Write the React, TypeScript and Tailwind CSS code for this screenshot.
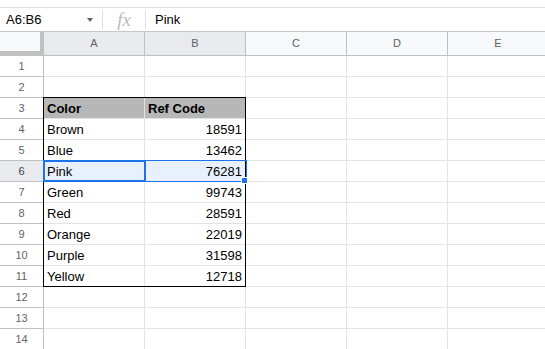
import React from "react"

const cols = ["A", "B", "C", "D", "E"]

const rows: Record<number, [string, string]> = {
  3: ["Color", "Ref Code"],
  4: ["Brown", "18591"],
  5: ["Blue", "13462"],
  6: ["Pink", "76281"],
  7: ["Green", "99743"],
  8: ["Red", "28591"],
  9: ["Orange", "22019"],
  10: ["Purple", "31598"],
  11: ["Yellow", "12718"],
}

const font = { fontFamily: '"Liberation Sans", Arial, sans-serif' }

function FormulaBar() {
  return (
    <div className="flex h-[25px] border-y border-[#e0e0e0] border-b-[#c7c7c7] bg-white text-[13px] text-black">
      <div className="flex w-[102px] items-center justify-between pl-[6px] pr-[9px]">
        <span>A6:B6</span>
        <span className="h-0 w-0 border-x-[3.5px] border-t-[4px] border-x-transparent border-t-[#616161]" />
      </div>
      <div className="my-[2px] w-px bg-[#e0e0e0]" />
      <div className="flex w-[42px] items-center justify-center">
        <span
          className="text-[19px] italic leading-none text-[#bdbdbd]"
          style={{ fontFamily: '"Liberation Serif", "Times New Roman", serif' }}
        >
          fx
        </span>
      </div>
      <div className="my-[2px] w-px bg-[#e0e0e0]" />
      <div className="flex items-center pl-[9px]">Pink</div>
    </div>
  )
}

function HeaderRow() {
  return (
    <>
      <div className="h-[24px] border-b-[5px] border-r-[4px] border-[#c0c0c0] bg-[#f8f9fa]" />
      {cols.map((c) => (
        <div
          key={c}
          className={`flex h-[24px] items-center justify-center border-b border-r border-[#c0c0c0] text-[11px] text-[#5f6368] ${
            c === "A" || c === "B" ? "bg-[#e8eaed]" : "bg-[#f8f9fa]"
          }`}
        >
          {c}
        </div>
      ))}
    </>
  )
}

function Row({ n }: { n: number }) {
  const data = rows[n]
  const isHead = n === 3
  const selected = n === 6
  return (
    <>
      <div
        className={`flex h-[21px] items-center justify-center border-b border-r border-[#c0c0c0] text-[11px] ${
          selected ? "bg-[#e8eaed] text-[#3c4043]" : "bg-white text-[#5f6368]"
        }`}
      >
        {n}
      </div>
      {cols.map((c, i) => {
        const text = data && i < 2 ? data[i] : ""
        let bg = "bg-white"
        if (isHead && i < 2) bg = "bg-[#b7b7b7]"
        if (selected && i < 2) bg = "bg-[#e8f0fe]"
        const align = i === 1 && !isHead ? "justify-end" : "justify-start"
        return (
          <div
            key={c}
            className={`flex h-[21px] items-end ${align} overflow-hidden whitespace-nowrap border-b border-r border-[#e2e3e3] px-[3px] pb-[1px] text-[13px] leading-[17px] text-black ${bg} ${
              isHead ? "font-bold" : ""
            }`}
          >
            {text}
          </div>
        )
      })}
    </>
  )
}

export default function App() {
  const rowNums = Array.from({ length: 14 }, (_, i) => i + 1)
  return (
    <div className="h-[349px] w-[545px] overflow-hidden bg-white" style={font}>
      <div className="h-[7px] bg-white" />
      <FormulaBar />
      <div className="relative w-[549px]">
        <div className="grid grid-cols-[44px_101px_101px_101px_101px_101px]">
          <HeaderRow />
          {rowNums.map((n) => (
            <Row key={n} n={n} />
          ))}
        </div>
        {/* table outline A3:B11 */}
        <div className="pointer-events-none absolute left-[43px] top-[65px] h-[190px] w-[203px] border border-black" />
        {/* selected range A6:B6 */}
        <div className="pointer-events-none absolute left-[43px] top-[128px] h-[22px] w-[204px] border border-[#1a73e8]" />
        <div className="pointer-events-none absolute left-[43px] top-[128px] h-[22px] w-[103px] border-2 border-[#1a73e8]" />
        <div className="pointer-events-none absolute left-[241px] top-[145px] h-[7px] w-[7px] border border-white bg-[#1a73e8]" />
      </div>
    </div>
  )
}
